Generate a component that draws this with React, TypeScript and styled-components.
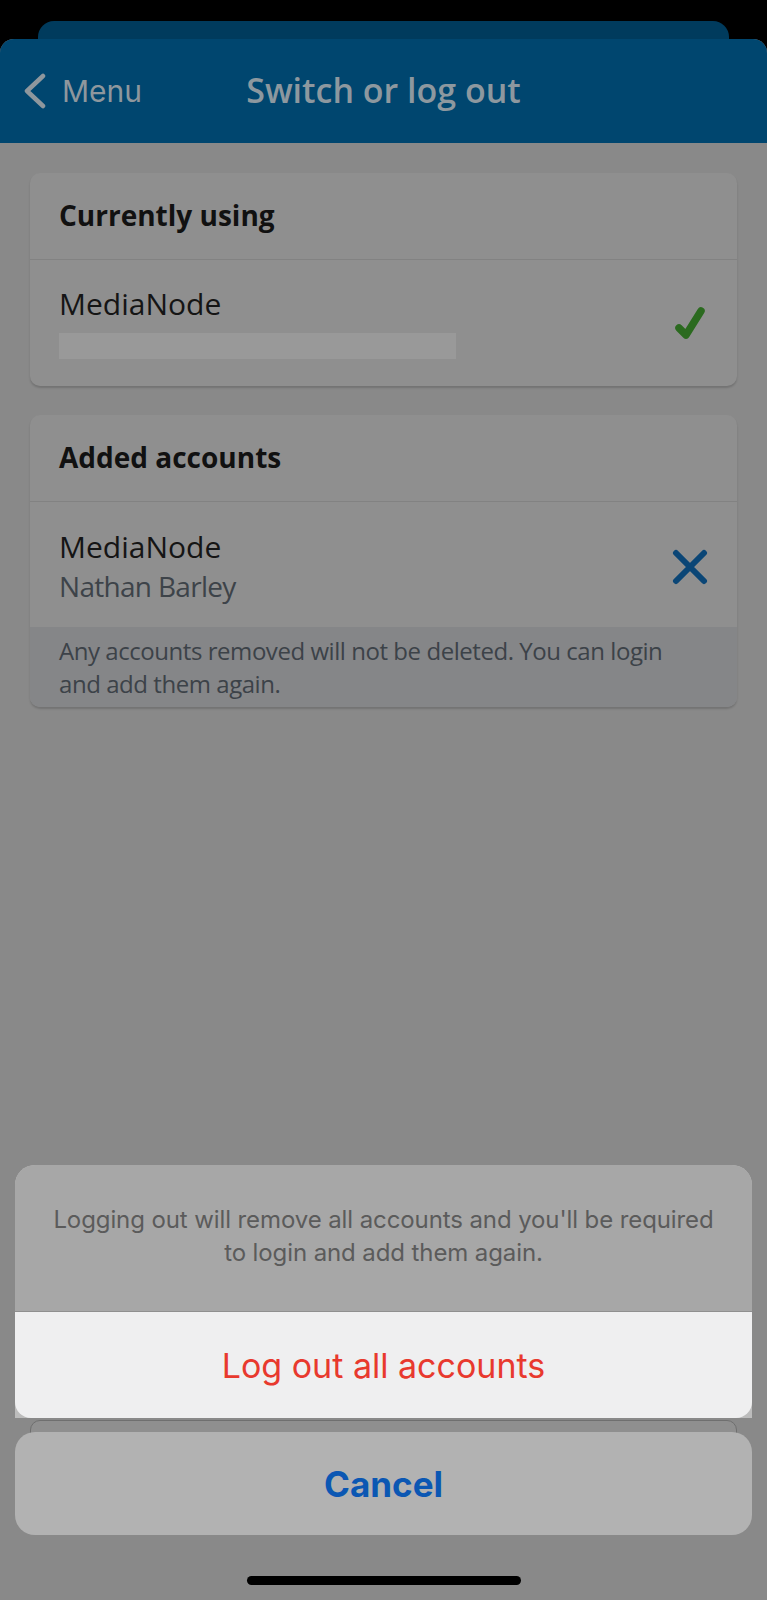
import styled, { createGlobalStyle } from "styled-components";

const GlobalStyle = createGlobalStyle`
  html, body {
    margin: 0;
    padding: 0;
    background: #000;
  }
  * {
    box-sizing: border-box;
  }
`;

const appFont = `"Open Sans", "Noto Sans", sans-serif`;
const iosFont = `Inter, Roboto, sans-serif`;

const Screen = styled.div`
  position: relative;
  width: 767px;
  height: 1600px;
  overflow: hidden;
  background: #000;
  display: flex;
  flex-direction: column;
  padding-top: 21px;
`;

const BackSheet = styled.div`
  height: 18px;
  margin: 0 38px;
  background: #003b5d;
  border-radius: 16px 16px 0 0;
`;

const Sheet = styled.div`
  flex: 1;
  display: flex;
  flex-direction: column;
  background: #898989;
  border-radius: 14px 14px 0 0;
  overflow: hidden;
`;

const NavBar = styled.header`
  height: 104px;
  flex-shrink: 0;
  background: #00466f;
  display: grid;
  grid-template-columns: 1fr auto 1fr;
  align-items: center;
`;

const BackButton = styled.div`
  display: flex;
  align-items: center;
  gap: 15px;
  margin-left: 23px;
  font-family: ${iosFont};
  font-size: 30px;
  color: #8e979d;
`;

const Title = styled.h1`
  margin: 0 0 2px;
  font-family: ${appFont};
  font-size: 34px;
  font-weight: 600;
  color: #8d989f;
`;

const Content = styled.main`
  flex: 1;
  display: flex;
  flex-direction: column;
  gap: 29px;
  padding: 30px 30px 140px;
`;

const Card = styled.section`
  background: #8f8f8f;
  border-radius: 10px;
  box-shadow: 0 2px 2px rgba(0, 0, 0, 0.16);
  overflow: hidden;
  font-family: ${appFont};
`;

const PeekCard = styled(Card)`
  margin-top: auto;
  height: 40px;
  border: 1px solid #6f6f6f;
  box-shadow: none;
`;

const CardHeader = styled.h2`
  margin: 0;
  height: 87px;
  display: flex;
  align-items: center;
  padding: 0 29px 2px;
  border-bottom: 1px solid #828282;
  font-size: 28px;
  font-weight: 700;
  color: #111;
`;

const AccountRow = styled.div<{ $pad: string }>`
  display: flex;
  align-items: center;
  justify-content: space-between;
  padding: ${(p) => p.$pad};
`;

const AccountInfo = styled.div`
  display: flex;
  flex-direction: column;
  line-height: 36px;
`;

const AccountName = styled.div`
  font-size: 30px;
  color: #151515;
`;

const AccountUser = styled.div`
  margin-top: 3px;
  font-size: 28px;
  letter-spacing: -0.7px;
  color: #3d4349;
`;

const Redacted = styled.div`
  margin-top: 11px;
  width: 397px;
  height: 26px;
  background: #999;
`;

const CardNote = styled.p`
  margin: 0;
  padding: 7px 30px 7px 29px;
  background: #858688;
  font-size: 24px;
  letter-spacing: -0.45px;
  line-height: 33px;
  color: #3c4248;
`;

const ActionSheet = styled.div`
  position: absolute;
  left: 15px;
  right: 15px;
  bottom: 0;
  display: flex;
  flex-direction: column;
  padding-bottom: 15px;
  font-family: ${iosFont};
`;

const ActionGroup = styled.div`
  display: flex;
  flex-direction: column;
  background: #bcbcbc;
  border-radius: 20px 20px 0 0;
  overflow: hidden;
`;

const ActionMessage = styled.div`
  height: 147px;
  display: flex;
  align-items: center;
  justify-content: center;
  padding: 0 30px 4px;
  background: #a7a7a7;
  border-bottom: 1px solid #8f8f8f;
  text-align: center;
  font-size: 24px;
  letter-spacing: -0.1px;
  line-height: 33px;
  color: #5b5b5b;
`;

const ActionButton = styled.button<{ $variant: "destructive" | "cancel" }>`
  height: ${(p) => (p.$variant === "cancel" ? "103px" : "106px")};
  margin-top: ${(p) => (p.$variant === "cancel" ? "14px" : "0")};
  border: none;
  border-radius: ${(p) => (p.$variant === "cancel" ? "20px" : "0 0 16px 16px")};
  background: ${(p) => (p.$variant === "cancel" ? "#b2b2b2" : "#efeff0")};
  color: ${(p) => (p.$variant === "cancel" ? "#0b57b3" : "#e8392e")};
  font-family: ${iosFont};
  font-size: ${(p) => (p.$variant === "cancel" ? "35px" : "34px")};
  font-weight: ${(p) => (p.$variant === "cancel" ? 700 : 400)};
  cursor: pointer;
`;

const HomeIndicator = styled.div`
  margin: 41px auto 0;
  width: 274px;
  height: 9px;
  border-radius: 5px;
  background: #000;
`;

function Chevron() {
  return (
    <svg width="24" height="36" viewBox="0 0 24 36">
      <polyline
        points="20,3 4,18 20,33"
        fill="none"
        stroke="#8e979d"
        strokeWidth="4.5"
        strokeLinecap="round"
        strokeLinejoin="round"
      />
    </svg>
  );
}

function CheckIcon() {
  return (
    <svg width="34" height="36" viewBox="0 0 34 36">
      <polyline
        points="7,23 14,30 29,6"
        fill="none"
        stroke="#2b6a1f"
        strokeWidth="7.5"
        strokeLinecap="round"
        strokeLinejoin="round"
      />
    </svg>
  );
}

function RemoveIcon() {
  return (
    <svg width="36" height="36" viewBox="0 0 36 36">
      <path
        d="M4 4 L32 32 M32 4 L4 32"
        fill="none"
        stroke="#0b4676"
        strokeWidth="6"
        strokeLinecap="round"
      />
    </svg>
  );
}

export default function App() {
  return (
    <Screen>
      <GlobalStyle />
      <BackSheet />
      <Sheet>
        <NavBar>
          <BackButton>
            <Chevron />
            Menu
          </BackButton>
          <Title>Switch or log out</Title>
          <div />
        </NavBar>
        <Content>
          <Card>
            <CardHeader>Currently using</CardHeader>
            <AccountRow $pad="26px 31px 27px 29px">
              <AccountInfo>
                <AccountName>MediaNode</AccountName>
                <Redacted />
              </AccountInfo>
              <CheckIcon />
            </AccountRow>
          </Card>
          <Card>
            <CardHeader>Added accounts</CardHeader>
            <AccountRow $pad="27px 29px 23px 29px">
              <AccountInfo>
                <AccountName>MediaNode</AccountName>
                <AccountUser>Nathan Barley</AccountUser>
              </AccountInfo>
              <RemoveIcon />
            </AccountRow>
            <CardNote>
              Any accounts removed will not be deleted. You can login and add
              them again.
            </CardNote>
          </Card>
          <PeekCard />
        </Content>
      </Sheet>
      <ActionSheet>
        <ActionGroup>
          <ActionMessage>
            Logging out will remove all accounts and you'll be required to
            login and add them again.
          </ActionMessage>
          <ActionButton $variant="destructive">Log out all accounts</ActionButton>
        </ActionGroup>
        <ActionButton $variant="cancel">Cancel</ActionButton>
        <HomeIndicator />
      </ActionSheet>
    </Screen>
  );
}
